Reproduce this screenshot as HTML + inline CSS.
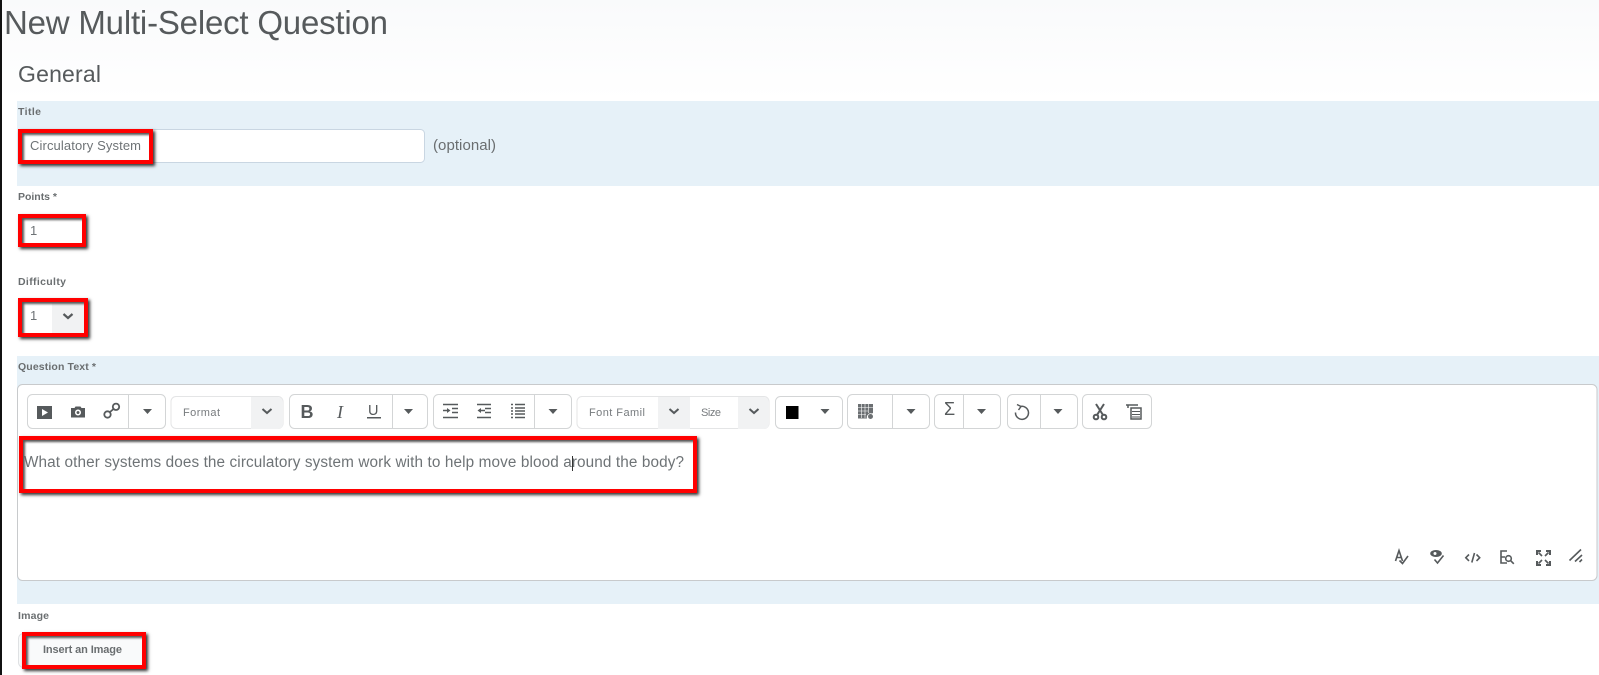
<!DOCTYPE html>
<html>
<head>
<meta charset="utf-8">
<style>
html,body{margin:0;padding:0;background:#fff}
#p{position:relative;width:1599px;height:675px;overflow:hidden;background:linear-gradient(#f9fafb 0,#fff 100px);font-family:"Liberation Sans",sans-serif}
svg{position:absolute;left:0;top:0}
text{font-family:"Liberation Sans",sans-serif;fill:#565a5c}
.r{position:absolute;box-sizing:border-box;border:4px solid #f00;box-shadow:2px 2px 3px #333,inset 2px 2px 2px #555}
</style>
</head>
<body>
<div id="p">
<svg width="1599" height="675" viewBox="0 0 1599 675">
<rect x="0" y="0" width="2" height="675" fill="#111"/>
<text x="4" y="34" font-size="33" textLength="384" lengthAdjust="spacing">New Multi-Select Question</text>
<text x="18" y="82" font-size="23" textLength="83" lengthAdjust="spacing">General</text>

<rect x="17" y="101" width="1582" height="85" fill="#e6f1f8"/>
<rect x="17" y="356" width="1582" height="248" fill="#e6f1f8"/>

<text x="18" y="115" font-size="10.5" font-weight="bold" textLength="23" lengthAdjust="spacing" style="fill:#6a6e70">Title</text>
<rect x="18.5" y="129.500" width="406" height="33" rx="4" fill="#fff" stroke="#c9d6e2"/>
<text x="30" y="150" font-size="13" textLength="111" lengthAdjust="spacing" style="fill:#6e7376">Circulatory System</text>
<text x="433" y="150" font-size="15" textLength="63" lengthAdjust="spacing" style="fill:#6a6e70">(optional)</text>

<text x="18" y="200" font-size="10.5" font-weight="bold" textLength="39" lengthAdjust="spacing" style="fill:#6a6e70">Points *</text>
<rect x="20" y="216" width="64" height="30" fill="#fff"/>
<text x="30" y="235" font-size="13" style="fill:#6e7376">1</text>

<text x="18" y="285" font-size="10.5" font-weight="bold" textLength="48" lengthAdjust="spacing" style="fill:#6a6e70">Difficulty</text>
<rect x="22" y="300" width="30" height="33" fill="#fff"/>
<rect x="52" y="300" width="33" height="33" fill="#f1f2f3"/>
<text x="30" y="320" font-size="13" style="fill:#6e7376">1</text>
<path d="M63.5 314l4.500 4 4.500-4" fill="none" stroke="#565a5c" stroke-width="2.200"/>

<text x="18" y="370" font-size="10.5" font-weight="bold" textLength="78" lengthAdjust="spacing" style="fill:#6a6e70">Question Text *</text>

<rect x="17.5" y="384.5" width="1579.5" height="196" rx="5" fill="#fff" stroke="#c8cacc"/>

<g fill="#fff" stroke="#d3d5d6">
<rect x="27.5" y="394.5" width="138" height="34" rx="5"/>
<rect x="289.5" y="394.5" width="138" height="34" rx="5"/>
<rect x="433.5" y="394.5" width="138" height="34" rx="5"/>
<rect x="775.5" y="396.5" width="67" height="32" rx="5"/>
<rect x="847.5" y="394.5" width="82" height="34" rx="5"/>
<rect x="934.5" y="394.5" width="66" height="34" rx="5"/>
<rect x="1007.5" y="394.5" width="70" height="34" rx="5"/>
<rect x="1082.5" y="394.5" width="69" height="34" rx="5"/>
</g>
<rect x="171" y="396.5" width="112" height="32" rx="5" fill="#fff" stroke="#e4e5e6"/>
<path d="M251 397h27a5 5 0 0 1 5 5v22a5 5 0 0 1-5 5h-27z" fill="#f1f2f3"/>
<rect x="577" y="396.5" width="192" height="32" rx="5" fill="#fff" stroke="#e4e5e6"/>
<rect x="658" y="397" width="32" height="32" fill="#f1f2f3"/>
<path d="M738 397h26a5 5 0 0 1 5 5v22a5 5 0 0 1-5 5h-26z" fill="#f1f2f3"/>
<path d="M128.5 395v34M392.5 395v34M534.5 395v34M892.5 395v34M963.5 395v34M1040.5 395v34" stroke="#d3d5d6" fill="none"/>

<text x="183" y="416" font-size="11" textLength="37" lengthAdjust="spacing" style="fill:#777b7e">Format</text>
<text x="589" y="416" font-size="11" textLength="56" lengthAdjust="spacing" style="fill:#777b7e">Font Famil</text>
<text x="701" y="416" font-size="11" textLength="20" lengthAdjust="spacing" style="fill:#777b7e">Size</text>

<g fill="none" stroke="#565a5c" stroke-width="2">
<path d="M262.5 409l4.500 4 4.500-4M669.500 409l4.500 4 4.500-4M749.500 409l4.500 4 4.500-4"/>
</g>
<g fill="#565a5c">
<path d="M143 409h9l-4.500 5zM404 409h9l-4.500 5zM548.500 409h9l-4.500 5zM820.500 409h9l-4.500 5zM906.500 409h9l-4.500 5zM977 409h9l-4.500 5zM1053.500 409h9l-4.500 5z"/>
<path fill-rule="evenodd" d="M37 406h15v13h-15zM42 409v7l6-3.500z"/>
<path fill-rule="evenodd" d="M71 408h3.500l1-1.500h5l1 1.500h3.500v9.500h-14zM78 409.500a3 3 0 1 0 .01 0zM78 411a1.500 1.500 0 1 1-.01 0z"/>
</g>
<g fill="none" stroke="#565a5c" stroke-width="1.800">
<circle cx="107.500" cy="414.500" r="3.200"/>
<circle cx="116" cy="406.800" r="3.200"/>
<path d="M110 412l3.500-3"/>
</g>
<rect x="786" y="406" width="12.500" height="13" fill="#000"/>

<text x="300.500" y="418" font-size="18" font-weight="bold">B</text>
<text x="337" y="418" font-size="18" font-style="italic" style="font-family:'Liberation Serif',serif">I</text>
<text x="368" y="415" font-size="14.500">U</text>
<rect x="367" y="417" width="14" height="1.500" fill="#565a5c"/>

<g fill="none" stroke="#565a5c" stroke-width="1.500">
<path d="M443 404.500h15M452 408.500h6M452 412.500h6M443 417.500h15M443 410.500h4"/>
<path d="M477 404.500h14M485 408.500h6M485 412.500h6M477 417.500h14M481 410.500h4"/>
<path d="M515 404.500h10M515 408.000h10M515 411.000h10M515 414.000h10M515 417.500h10M511 404.500h2M511 408.000h2M511 411.000h2M511 414.000h2M511 417.500h2"/>
</g>
<path d="M447 408l3.500 2.500-3.500 2.500zM481 408l-3.500 2.500 3.500 2.500z" fill="#565a5c"/>

<g fill="#6b6f72">
<path fill-rule="evenodd" d="M858 404h15v9l-1 .5a4 4 0 0 0-5 5h-9z"/>
<circle cx="870.500" cy="416.500" r="2.500"/>
</g>
<path d="M858 407.500h15M858 411h10M858 414.500h8M861.500 404v14M865 404v14M868.500 404v9" stroke="#fff" stroke-width=".6" fill="none"/>
<text x="944" y="415" font-size="18" style="fill:#565a5c">Σ</text>
<path d="M1020.500 406.500a6.500 6.500 0 1 1-5 6" fill="none" stroke="#565a5c" stroke-width="1.500"/>
<path d="M1017 404.500l4 2-2.500 3.500" fill="none" stroke="#565a5c" stroke-width="1.500"/>
<g fill="none" stroke="#565a5c" stroke-width="2">
<path d="M1096 404l7 11M1104 404l-7 11"/>
<circle cx="1096" cy="417" r="2.300"/>
<circle cx="1104" cy="417" r="2.300"/>
</g>
<g fill="none" stroke="#565a5c" stroke-width="1.500">
<path d="M1126 405h12"/>
<path d="M1131 408h10v11h-10zM1128 405v3"/>
<path d="M1132 411.500h8M1132 414.500h8M1132 417h8" stroke-width="1"/>
</g>

<text x="24" y="467" font-size="15.300" textLength="660" lengthAdjust="spacing" style="fill:#6e7376">What other systems does the circulatory system work with to help move blood around the body?</text>
<rect x="572" y="456" width="1" height="15" fill="#333"/>

<g fill="none" stroke="#565a5c" stroke-width="1.600">
<path d="M1395.500 561l3.500-10.500 3.500 10.500M1396.800 557.500h4.500"/>
<path d="M1399.500 560.500l3 3 5.500-7.500"/>
<path d="M1434.500 559.500l3 3.500 6-7.500"/>
<path d="M1469 554.500l-3.200 3.200 3.200 3.200M1476.500 554.500l3.200 3.200-3.200 3.200M1474.500 553l-2.700 9.500"/>
<path d="M1507 551h-6v12h6M1501 557h4"/>
<circle cx="1508.500" cy="558.500" r="2.800"/>
<path d="M1510.800 560.800l3 3"/>
<path d="M1537 555v-4h4M1546 551h4v4M1550 561v4h-4M1541 565h-4v-4" stroke-width="2"/>
<path d="M1538.500 552.500l3.500 3.500M1548.500 552.500l-3.500 3.500M1548.500 563.500l-3.500-3.500M1538.500 563.500l3.500-3.500"/>
<path d="M1569.500 560.500l11.500-11M1575 561.500l7-6.500M1579.500 562l2.500-2.500"/>
</g>
<ellipse cx="1436" cy="553.500" rx="5.800" ry="3.500" fill="#565a5c"/>
<circle cx="1435" cy="553.500" r="1.500" fill="#fff"/>

<text x="18" y="619" font-size="10.5" font-weight="bold" textLength="31" lengthAdjust="spacing" style="fill:#6a6e70">Image</text>
<rect x="18.5" y="633.5" width="128" height="34" rx="5" fill="#f9fafb" stroke="#dfe1e3"/>
<text x="43" y="653" font-size="11" font-weight="bold" textLength="79" lengthAdjust="spacing" style="fill:#6a6e70">Insert an Image</text>
</svg>

<div class="r" style="left:18px;top:129px;width:135px;height:35px"></div>
<div class="r" style="left:18px;top:214px;width:68px;height:33px"></div>
<div class="r" style="left:18px;top:298px;width:70px;height:39px"></div>
<div class="r" style="left:19px;top:436px;width:678px;height:57px"></div>
<div class="r" style="left:22px;top:632px;width:124px;height:37px"></div>
</div>
</body>
</html>
